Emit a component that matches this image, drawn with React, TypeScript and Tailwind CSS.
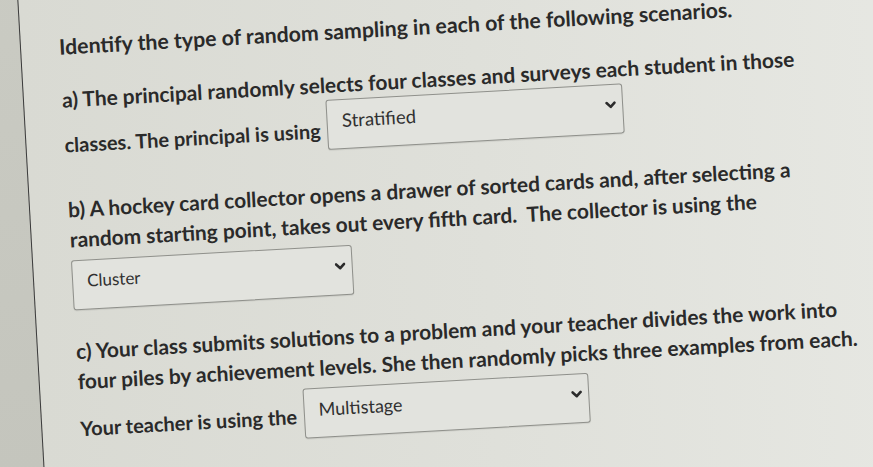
import React from "react";

function Chevron() {
  return (
    <svg width="11" height="8" viewBox="0 0 11 8" className="shrink-0">
      <polyline
        points="1.5,1.8 5.5,5.8 9.5,1.8"
        fill="none"
        stroke="#2b2b2b"
        strokeWidth="2.6"
        strokeLinecap="round"
        strokeLinejoin="round"
      />
    </svg>
  );
}

function Select({ value, width, size }: { value: string; width: string; size: string }) {
  return (
    <div
      className={`${width} h-[50px] shrink-0 flex items-center justify-between pl-[14px] pr-[6px] pb-[8px] border border-[#8f908b] rounded-[3px] bg-[#e2e3de] shadow-[0_1px_1px_rgba(0,0,0,0.08)]`}
    >
      <span className={`${size} font-normal text-[#303030]`}>{value}</span>
      <Chevron />
    </div>
  );
}

export default function App() {
  return (
    <div className="w-[873px] h-[467px] overflow-hidden bg-[#c7c8c0] font-['Lato','Liberation_Sans',sans-serif]">
      <div className="w-[1000px] h-[600px] -ml-[64px] -mt-[67px] rotate-[-3.2deg] flex">
        <div className="w-[95px] shrink-0 bg-gradient-to-b from-[#cacbc3] to-[#c3c4bc]" />
        <div className="flex-1 border-l border-[#3a3a3a] bg-gradient-to-r from-[#d9dad3] via-[#dfe0da] to-[#e7e8e3] pt-[78px] pl-[38px] text-[20.9px] leading-[30px] font-bold text-[#2a2a2a]">
          <p className="text-[21.3px]">Identify the type of random sampling in each of the following scenarios.</p>

          <p className="mt-[23px]">
            a) The principal randomly selects four classes and surveys each student in those
          </p>
          <div className="flex items-end gap-[7px]">
            <span className="mb-[5px] text-[20px]">classes. The principal is using</span>
            <Select value="Stratified" width="w-[297px]" size="text-[18.5px]" />
          </div>

          <p className="mt-[30px]">
            b) A hockey card collector opens a drawer of sorted cards and, after selecting a
          </p>
          <p>random starting point, takes out every fifth card.&nbsp; The collector is using the</p>
          <div className="mt-[6px]">
            <Select value="Cluster" width="w-[281px]" size="text-[17px]" />
          </div>

          <p className="mt-[26px]">
            c) Your class submits solutions to a problem and your teacher divides the work into
          </p>
          <p>four piles by achievement levels. She then randomly picks three examples from each.</p>
          <div className="mt-[5px] flex items-center gap-[7px]">
            <span className="mt-[4px] text-[20px]">Your teacher is using the</span>
            <Select value="Multistage" width="w-[286px]" size="text-[18px]" />
          </div>
        </div>
      </div>
    </div>
  );
}
